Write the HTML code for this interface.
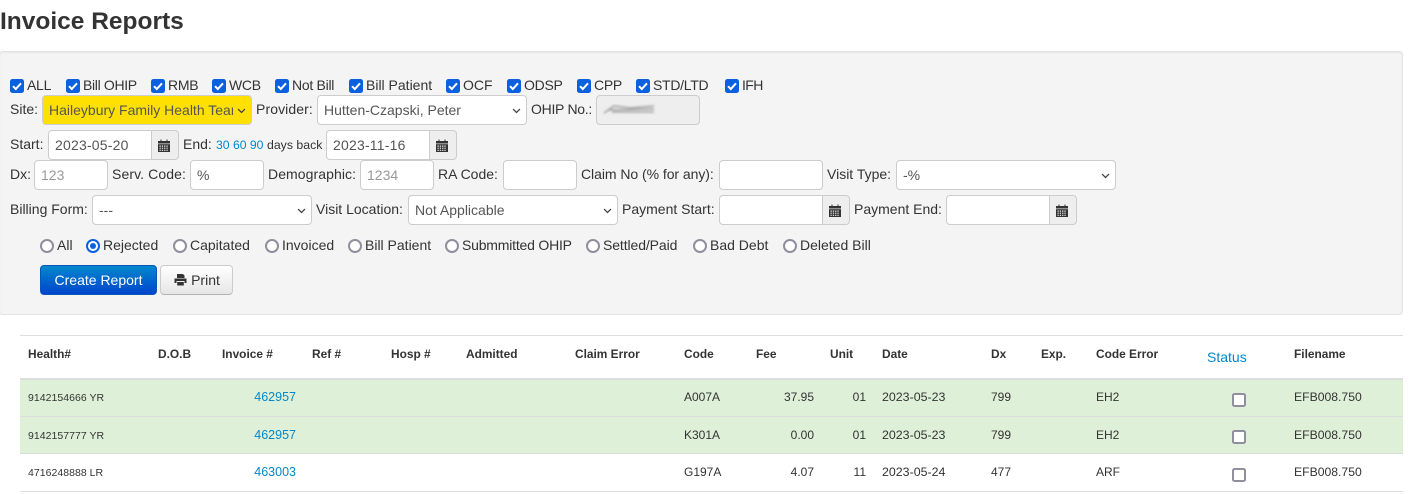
<!DOCTYPE html>
<html>
<head>
<meta charset="utf-8">
<style>
html,body{margin:0;padding:0;background:#fff;}
body{width:1423px;height:494px;position:relative;overflow:hidden;font-family:"Liberation Sans",Arial,sans-serif;font-size:14px;color:#333;}
.t{position:absolute;line-height:20px;white-space:nowrap;}
.k{letter-spacing:-.28px;}
.panel{position:absolute;left:-1px;top:51px;width:1402px;height:262px;background:#f4f4f4;border:1px solid #e3e3e3;border-radius:4px;box-shadow:inset 0 1px 1px rgba(0,0,0,.05);}
.i{position:absolute;box-sizing:border-box;height:30px;background:#fff;border:1px solid #ccc;border-radius:4px;line-height:29px;padding-left:6px;color:#555;white-space:nowrap;overflow:hidden;}
.ph{color:#999;}
.ig{border-radius:4px 0 0 4px;}
.dt{letter-spacing:.2px;}
.ad{position:absolute;box-sizing:border-box;height:30px;width:28px;background:#eee;border:1px solid #ccc;border-radius:0 4px 4px 0;}
.ad svg{position:absolute;left:6px;top:8px;}
.cr{position:absolute;right:5px;top:12px;}
.cb{position:absolute;box-sizing:border-box;width:14px;height:14px;top:79px;background:#0b60e0;border-radius:2.5px;}
.cb svg{position:absolute;left:0;top:0;}
.r{position:absolute;box-sizing:border-box;width:14px;height:14px;top:239px;background:#fff;border:2px solid #8f8f9d;border-radius:50%;}
.r.on{border-color:#0b60e0;}
.r.on:after{content:"";position:absolute;left:2px;top:2px;width:6px;height:6px;border-radius:50%;background:#0b60e0;}
.btn{position:absolute;box-sizing:border-box;top:265px;height:30px;line-height:29px;border-radius:4px;text-align:center;white-space:nowrap;}
.hl{position:absolute;left:20px;width:1383px;height:1px;background:#ddd;}
.g{position:absolute;left:20px;width:1383px;background:#dff0d8;}
.h{position:absolute;top:344px;line-height:20px;font-size:11.9px;font-weight:bold;white-space:nowrap;color:#333;}
.c{position:absolute;line-height:20px;font-size:12px;white-space:nowrap;color:#333;}
.s{font-size:10.5px;margin-top:1px;letter-spacing:.03px;}
.d{font-size:12.4px;}
.n{text-align:right;}
.a{color:#0088cc;}
.x{position:absolute;box-sizing:border-box;left:1232px;width:14px;height:14px;background:#fff;border:2px solid #8f8f9d;border-radius:2.5px;}
</style>
</head>
<body>
<svg width="0" height="0" style="position:absolute">
<defs>
<symbol id="ck" viewBox="0 0 14 14"><path d="M3 7.2 L5.8 10 L11 4.3" fill="none" stroke="#fff" stroke-width="2"/></symbol>
<symbol id="cal" viewBox="0 0 12 13"><path d="M0 2h2.5V.5h1V2h5V.5h1V2H12v2.5H0z" fill="#333"/><path d="M0 5.2h12V13H0z" fill="#333"/><path d="M1.5 6.5h1.3v1.2H1.5zM3.8 6.5h1.3v1.2H3.8zM6.1 6.5h1.3v1.2H6.1zM8.4 6.5h1.3v1.2H8.4zM1.5 8.6h1.3v1.2H1.5zM3.8 8.6h1.3v1.2H3.8zM6.1 8.6h1.3v1.2H6.1zM8.4 8.6h1.3v1.2H8.4zM1.5 10.7h1.3v1.2H1.5zM3.8 10.7h1.3v1.2H3.8zM6.1 10.7h1.3v1.2H6.1zM8.4 10.7h1.3v1.2H8.4z" fill="#eee"/></symbol>
<symbol id="chev" viewBox="0 0 10 7"><path d="M1 1.2 L5 5.2 L9 1.2" fill="none" stroke="#444" stroke-width="1.5"/></symbol>
</defs>
</svg>

<div class="t" style="left:0;top:7px;font-size:24.5px;font-weight:bold;line-height:30px;">Invoice Reports</div>
<div class="panel"></div>

<!-- checkboxes -->
<div class="cb" style="left:10px"><svg width="14" height="14"><use href="#ck"/></svg></div><div class="t k" style="left:27px;top:75px">ALL</div>
<div class="cb" style="left:66px"><svg width="14" height="14"><use href="#ck"/></svg></div><div class="t k" style="left:83px;top:75px;letter-spacing:-.33px">Bill OHIP</div>
<div class="cb" style="left:151px"><svg width="14" height="14"><use href="#ck"/></svg></div><div class="t k" style="left:168px;top:75px">RMB</div>
<div class="cb" style="left:212px"><svg width="14" height="14"><use href="#ck"/></svg></div><div class="t k" style="left:229px;top:75px">WCB</div>
<div class="cb" style="left:275px"><svg width="14" height="14"><use href="#ck"/></svg></div><div class="t k" style="left:292px;top:75px">Not Bill</div>
<div class="cb" style="left:349px"><svg width="14" height="14"><use href="#ck"/></svg></div><div class="t" style="left:366px;top:75px">Bill Patient</div>
<div class="cb" style="left:446px"><svg width="14" height="14"><use href="#ck"/></svg></div><div class="t" style="left:463px;top:75px">OCF</div>
<div class="cb" style="left:507px"><svg width="14" height="14"><use href="#ck"/></svg></div><div class="t k" style="left:524px;top:75px">ODSP</div>
<div class="cb" style="left:577px"><svg width="14" height="14"><use href="#ck"/></svg></div><div class="t k" style="left:594px;top:75px">CPP</div>
<div class="cb" style="left:636px"><svg width="14" height="14"><use href="#ck"/></svg></div><div class="t k" style="left:653px;top:75px">STD/LTD</div>
<div class="cb" style="left:725px"><svg width="14" height="14"><use href="#ck"/></svg></div><div class="t" style="left:742px;top:75px;letter-spacing:-.6px">IFH</div>

<!-- site row -->
<div class="t" style="left:10px;top:99px">Site:</div>
<div class="i" style="left:42px;top:95px;width:210px;background:#ffe000;padding-right:18px"><span style="display:block;overflow:hidden;width:184px;">Haileybury Family Health Team</span><svg class="cr" width="9" height="6" style="right:5px"><use href="#chev"/></svg></div>
<div class="t" style="left:256px;top:99px;letter-spacing:.1px">Provider:</div>
<div class="i" style="left:317px;top:95px;width:210px">Hutten-Czapski, Peter<svg class="cr" width="9" height="6"><use href="#chev"/></svg></div>
<div class="t k" style="left:531px;top:99px">OHIP No.:</div>
<div class="i" style="left:596px;top:95px;width:104px;background:#eee"></div>
<svg style="position:absolute;left:600px;top:100px" width="60" height="20"><defs><filter id="b" x="-10%" y="-100%" width="120%" height="300%"><feGaussianBlur stdDeviation="1"/></filter></defs><path d="M4 13 L14 6 L30 8 L54 6 M8 10 L54 9 M12 12 L54 12" stroke="#a2a2a2" stroke-width="1.6" fill="none" filter="url(#b)"/></svg>

<!-- date row -->
<div class="t" style="left:10px;top:134px">Start:</div>
<div class="i ig dt" style="left:48px;top:130px;width:104px">2023-05-20</div>
<div class="ad" style="left:151px;top:130px"><svg width="12" height="13"><use href="#cal"/></svg></div>
<div class="t" style="left:183px;top:134px">End:</div>
<div class="t a" style="left:216px;top:135px;font-size:12.2px">30 60 90</div>
<div class="t" style="left:267px;top:135px;font-size:12.3px">days back</div>
<div class="i ig dt" style="left:326px;top:130px;width:104px">2023-11-16</div>
<div class="ad" style="left:429px;top:130px"><svg width="12" height="13"><use href="#cal"/></svg></div>

<!-- dx row -->
<div class="t" style="left:10px;top:164px">Dx:</div>
<div class="i ph" style="left:34px;top:160px;width:74px">123</div>
<div class="t" style="left:112px;top:164px;letter-spacing:.1px">Serv. Code:</div>
<div class="i" style="left:190px;top:160px;width:74px">%</div>
<div class="t" style="left:268px;top:164px;letter-spacing:.08px">Demographic:</div>
<div class="i ph" style="left:360px;top:160px;width:74px">1234</div>
<div class="t" style="left:438px;top:164px">RA Code:</div>
<div class="i" style="left:503px;top:160px;width:74px"></div>
<div class="t" style="left:581px;top:164px;letter-spacing:-.05px">Claim No (% for any):</div>
<div class="i" style="left:719px;top:160px;width:104px"></div>
<div class="t" style="left:827px;top:164px">Visit Type:</div>
<div class="i" style="left:896px;top:160px;width:220px">-%<svg class="cr" width="9" height="6"><use href="#chev"/></svg></div>

<!-- billing row -->
<div class="t" style="left:10px;top:199px">Billing Form:</div>
<div class="i" style="left:92px;top:195px;width:220px">---<svg class="cr" width="9" height="6"><use href="#chev"/></svg></div>
<div class="t" style="left:316px;top:199px">Visit Location:</div>
<div class="i" style="left:408px;top:195px;width:210px">Not Applicable<svg class="cr" width="9" height="6"><use href="#chev"/></svg></div>
<div class="t" style="left:622px;top:199px">Payment Start:</div>
<div class="i ig" style="left:719px;top:195px;width:104px"></div>
<div class="ad" style="left:822px;top:195px"><svg width="12" height="13"><use href="#cal"/></svg></div>
<div class="t" style="left:854px;top:199px">Payment End:</div>
<div class="i ig" style="left:946px;top:195px;width:104px"></div>
<div class="ad" style="left:1049px;top:195px"><svg width="12" height="13"><use href="#cal"/></svg></div>

<!-- radios -->
<div class="r" style="left:40px"></div><div class="t" style="left:57px;top:235px">All</div>
<div class="r on" style="left:86px"></div><div class="t" style="left:103px;top:235px">Rejected</div>
<div class="r" style="left:173px"></div><div class="t" style="left:190px;top:235px">Capitated</div>
<div class="r" style="left:265px"></div><div class="t" style="left:282px;top:235px">Invoiced</div>
<div class="r" style="left:348px"></div><div class="t" style="left:365px;top:235px">Bill Patient</div>
<div class="r" style="left:445px"></div><div class="t" style="left:462px;top:235px;letter-spacing:-.2px">Submmitted OHIP</div>
<div class="r" style="left:586px"></div><div class="t" style="left:603px;top:235px;letter-spacing:-.1px">Settled/Paid</div>
<div class="r" style="left:693px"></div><div class="t" style="left:710px;top:235px">Bad Debt</div>
<div class="r" style="left:783px"></div><div class="t" style="left:800px;top:235px">Deleted Bill</div>

<!-- buttons -->
<div class="btn" style="left:40px;width:117px;color:#fff;background:linear-gradient(#0088cc,#0044cc);border:1px solid #0a55b8;">Create Report</div>
<div class="btn" style="left:160px;width:73px;color:#333;background:linear-gradient(#fff,#e6e6e6);border:1px solid #ccc;border-bottom-color:#b3b3b3;padding-left:18px;">Print</div>
<svg style="position:absolute;left:174px;top:274px" width="13" height="12" viewBox="0 0 13 12"><path d="M3 0h6l1.5 1.5V4H3z M0.5 4.5h12V9h-2V7H2.5v2h-2z M3.2 8h6.6v3.5H3.2z" fill="#333"/></svg>

<!-- table -->
<div class="hl" style="top:335px"></div>
<div class="g" style="top:378px;height:75px"></div>
<div class="hl" style="top:378px;height:2px"></div>
<div class="hl" style="top:416px"></div>
<div class="hl" style="top:453px"></div>
<div class="hl" style="top:491px"></div>

<div class="h" style="left:28px">Health#</div>
<div class="h" style="left:158px">D.O.B</div>
<div class="h" style="left:222px">Invoice #</div>
<div class="h" style="left:312px">Ref #</div>
<div class="h" style="left:391px">Hosp #</div>
<div class="h" style="left:466px">Admitted</div>
<div class="h" style="left:575px">Claim Error</div>
<div class="h" style="left:684px">Code</div>
<div class="h" style="left:756px">Fee</div>
<div class="h" style="left:830px">Unit</div>
<div class="h" style="left:882px">Date</div>
<div class="h" style="left:991px">Dx</div>
<div class="h" style="left:1041px">Exp.</div>
<div class="h" style="left:1096px">Code Error</div>
<div class="t a" style="left:1207px;top:347px">Status</div>
<div class="h" style="left:1294px">Filename</div>

<!-- row 1 -->
<div class="c s" style="left:28px;top:387px">9142154666 YR</div>
<div class="c a n" style="left:196px;width:100px;top:387px;font-size:12.5px">462957</div>
<div class="c" style="left:684px;top:387px">A007A</div>
<div class="c n" style="left:714px;width:100px;top:387px">37.95</div>
<div class="c n" style="left:766px;width:100px;top:387px">01</div>
<div class="c d" style="left:882px;top:387px">2023-05-23</div>
<div class="c" style="left:991px;top:387px">799</div>
<div class="c" style="left:1096px;top:387px">EH2</div>
<div class="x" style="top:393px"></div>
<div class="c" style="left:1294px;top:387px;font-size:12.2px">EFB008.750</div>

<!-- row 2 -->
<div class="c s" style="left:28px;top:425px">9142157777 YR</div>
<div class="c a n" style="left:196px;width:100px;top:425px;font-size:12.5px">462957</div>
<div class="c" style="left:684px;top:425px">K301A</div>
<div class="c n" style="left:714px;width:100px;top:425px">0.00</div>
<div class="c n" style="left:766px;width:100px;top:425px">01</div>
<div class="c d" style="left:882px;top:425px">2023-05-23</div>
<div class="c" style="left:991px;top:425px">799</div>
<div class="c" style="left:1096px;top:425px">EH2</div>
<div class="x" style="top:430px"></div>
<div class="c" style="left:1294px;top:425px;font-size:12.2px">EFB008.750</div>

<!-- row 3 -->
<div class="c s" style="left:28px;top:462px">4716248888 LR</div>
<div class="c a n" style="left:196px;width:100px;top:462px;font-size:12.5px">463003</div>
<div class="c" style="left:684px;top:462px">G197A</div>
<div class="c n" style="left:714px;width:100px;top:462px">4.07</div>
<div class="c n" style="left:766px;width:100px;top:462px">11</div>
<div class="c d" style="left:882px;top:462px">2023-05-24</div>
<div class="c" style="left:991px;top:462px">477</div>
<div class="c" style="left:1096px;top:462px">ARF</div>
<div class="x" style="top:468px"></div>
<div class="c" style="left:1294px;top:462px;font-size:12.2px">EFB008.750</div>
</body>
</html>
